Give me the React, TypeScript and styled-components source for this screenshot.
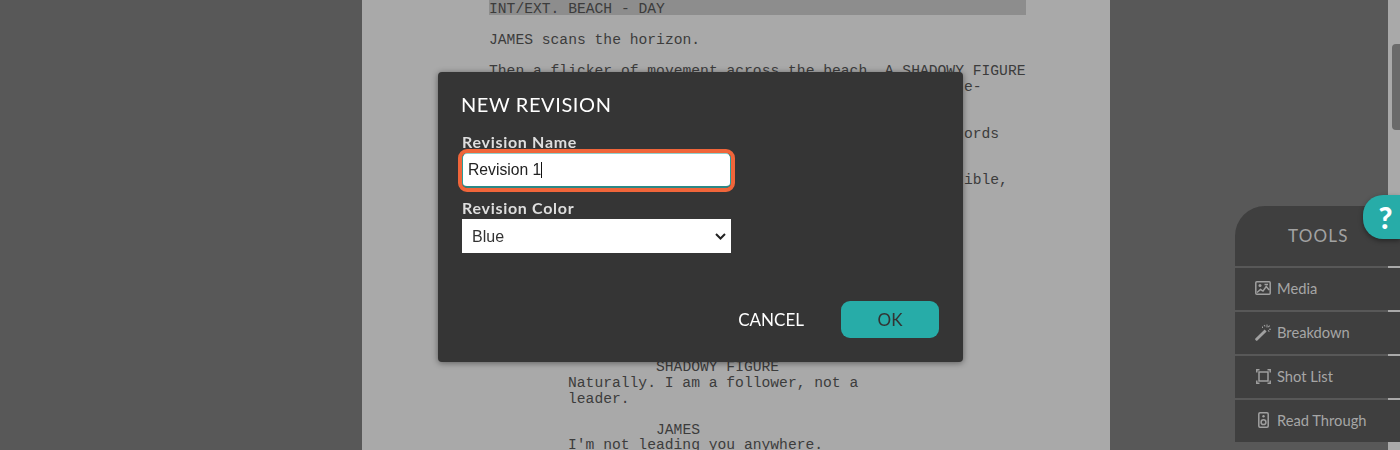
import styled, { createGlobalStyle } from "styled-components"

const GlobalStyle = createGlobalStyle`
  html, body {
    margin: 0;
    height: 100%;
    overflow: hidden;
    background: #585858;
  }
`

type LineKind = "action" | "character" | "dialogue"

const blank = (count: number) => Array.from({ length: count }, () => ({ text: " ", kind: "action" as LineKind }))
const action = (text: string) => ({ text, kind: "action" as LineKind })

// only the tails that stick out from behind the dialog are readable in the script
const SCRIPT_LINES = [
  ...blank(1),
  action("JAMES scans the horizon."),
  ...blank(1),
  action("Then a flicker of movement across the beach. A SHADOWY FIGURE"),
  action(" ".repeat(54) + "e-"),
  ...blank(2),
  action(" ".repeat(54) + "ords"),
  ...blank(2),
  action(" ".repeat(54) + "ible,"),
  ...blank(11),
  { text: "SHADOWY FIGURE", kind: "character" as LineKind },
  { text: "Naturally. I am a follower, not a", kind: "dialogue" as LineKind },
  { text: "leader.", kind: "dialogue" as LineKind },
  ...blank(1),
  { text: "JAMES", kind: "character" as LineKind },
  { text: "I'm not leading you anywhere.", kind: "dialogue" as LineKind },
]

function MediaIcon() {
  return (
    <svg viewBox="0 0 16 14" width="16" height="14" fill="none" stroke="currentColor" strokeWidth="1.5">
      <rect x="0.8" y="0.8" width="14.4" height="12.4" rx="1" />
      <circle cx="5" cy="4.6" r="1.5" fill="currentColor" stroke="none" />
      <path d="M2 11.5l3.5-3 2.5 1.6 3.2-4.6 3 3.6" />
      <path d="M9.5 3.5h3.5" />
    </svg>
  )
}

function WandIcon() {
  return (
    <svg viewBox="0 0 16 17" width="16" height="17" fill="currentColor">
      <path d="M0.4 14.6L9.6 5.4l2 2-9.2 9.2a1 1 0 0 1-1.3 0l-.7-.7a1 1 0 0 1 0-1.3z" />
      <path d="M11.5 0.5h1v3h-1zM14 4.8h2v1h-2zM7 4h1v-1.6H7zM14.4 1.2l.7.7-1.6 1.6-.7-.7zM8.6 1.4l.7-.7 1.3 1.4-.7.7zM14 8l.7-.7-1.3-1.3-.7.7z" />
    </svg>
  )
}

function FrameIcon() {
  return (
    <svg viewBox="0 0 15 15" width="15" height="15" fill="none" stroke="currentColor" strokeWidth="1.5">
      <rect x="3" y="3" width="9" height="9" />
      <path d="M0.8 3.5V0.8H3.5M11.5 0.8h2.7v2.7M14.2 11.5v2.7h-2.7M3.5 14.2H0.8v-2.7" />
    </svg>
  )
}

function SpeakerIcon() {
  return (
    <svg viewBox="0 0 11 16" width="11" height="16" fill="none" stroke="currentColor" strokeWidth="1.5">
      <rect x="0.8" y="0.8" width="9.4" height="14.4" rx="1.2" />
      <circle cx="5.5" cy="10.2" r="2.4" />
      <circle cx="5.5" cy="4.2" r="1.2" fill="currentColor" stroke="none" />
    </svg>
  )
}

const TOOLS = [
  { label: "Media", icon: <MediaIcon /> },
  { label: "Breakdown", icon: <WandIcon /> },
  { label: "Shot List", icon: <FrameIcon /> },
  { label: "Read Through", icon: <SpeakerIcon /> },
]

function App() {
  return (
    <>
      <GlobalStyle />
      <Workspace>
        <Paper>
          <Heading>INT/EXT. BEACH - DAY</Heading>
          {SCRIPT_LINES.map((line, i) => (
            <ScriptLine key={i} $kind={line.kind}>
              {line.text}
            </ScriptLine>
          ))}
        </Paper>
        <Scrollbar>
          <ScrollThumb />
        </Scrollbar>
      </Workspace>
      <ToolsPanel>
        <ToolsTitle>TOOLS</ToolsTitle>
        {TOOLS.map((tool) => (
          <ToolRow key={tool.label}>
            <ToolIcon>{tool.icon}</ToolIcon>
            {tool.label}
          </ToolRow>
        ))}
      </ToolsPanel>
      <HelpButton>?</HelpButton>
      <Overlay>
        <Modal>
          <ModalTitle>NEW REVISION</ModalTitle>
          <FieldLabel>Revision Name</FieldLabel>
          <NameField>
            <NameInput defaultValue="Revision 1" />
            <Caret />
          </NameField>
          <FieldLabel>Revision Color</FieldLabel>
          <ColorSelect defaultValue="Blue">
            <option>Blue</option>
            <option>Pink</option>
            <option>Yellow</option>
            <option>Green</option>
          </ColorSelect>
          <ModalActions>
            <CancelButton>CANCEL</CancelButton>
            <OkButton>OK</OkButton>
          </ModalActions>
        </Modal>
      </Overlay>
    </>
  )
}

const Workspace = styled.div`
  display: flex;
  justify-content: space-between;
  height: 450px;
  overflow: hidden;
  padding-left: 362px;
  background: #585858;
`

const Paper = styled.div`
  flex: none;
  box-sizing: border-box;
  width: 748px;
  height: 450px;
  overflow: hidden;
  padding: 0 84px 0 127px;
  background: #a9a9a9;
  color: #3c3c3c;
  font-family: "Liberation Mono", monospace;
  font-size: 14.67px;
  line-height: 15.6px;
  white-space: pre;
`

const Heading = styled.div`
  height: 15px;
  margin-bottom: 2.4px;
  background: #8d8d8d;
  line-height: 19px;
`

const ScriptLine = styled.div<{ $kind: LineKind }>`
  min-height: 15.6px;
  padding-left: ${(p) => (p.$kind === "character" ? "167px" : p.$kind === "dialogue" ? "79px" : "0")};
`

const Scrollbar = styled.div`
  flex: none;
  width: 12px;
  height: 450px;
  background: #a9a9a9;
`

const ScrollThumb = styled.div`
  width: 8px;
  height: 86px;
  margin: 44px 0 0 4px;
  border-radius: 4px 0 0 4px;
  background: #6a6a6a;
`

const ToolsPanel = styled.div`
  position: absolute;
  top: 206px;
  left: 1235px;
  width: 165px;
  font-family: Lato, sans-serif;
`

const ToolsTitle = styled.div`
  height: 60px;
  padding-left: 53px;
  border-top-left-radius: 30px;
  background: #3f3f3f;
  line-height: 60px;
  font-size: 17px;
  letter-spacing: 1.2px;
  color: #a2a2a2;
`

const ToolRow = styled.div`
  display: flex;
  align-items: center;
  box-sizing: border-box;
  height: 42px;
  margin-top: 2px;
  padding: 0 0 2px 20px;
  background: #3f3f3f;
  font-size: 14.7px;
  color: #a6a6a6;
`

const ToolIcon = styled.span`
  display: flex;
  justify-content: center;
  width: 16px;
  margin-right: 6px;
  color: #a0a0a0;
`

const HelpButton = styled.div`
  position: absolute;
  top: 195px;
  left: 1363px;
  display: flex;
  align-items: center;
  justify-content: center;
  box-sizing: border-box;
  width: 37px;
  height: 44px;
  padding-left: 8px;
  border-radius: 20px 0 0 20px;
  background: #27aca8;
  box-shadow: 0 2px 5px rgba(0, 0, 0, 0.4);
  color: #fff;
  font-family: Lato, sans-serif;
  font-size: 30px;
  font-weight: 900;
`

const Overlay = styled.div`
  position: fixed;
  inset: 0;
  display: flex;
  justify-content: center;
  align-items: flex-start;
  padding: 72px 0 0 1px;
`

const Modal = styled.div`
  box-sizing: border-box;
  display: flex;
  flex-direction: column;
  width: 525px;
  height: 290px;
  padding: 20px 24px 24px 24px;
  border-radius: 4px;
  background: #353535;
  box-shadow: 0 1px 6px rgba(0, 0, 0, 0.45);
  color: #fff;
  font-family: Lato, sans-serif;
`

const ModalTitle = styled.h2`
  margin: 0 0 17px -1px;
  font-size: 20px;
  font-weight: 400;
  line-height: 24px;
  letter-spacing: 0.6px;
`

const FieldLabel = styled.label`
  font-size: 16px;
  font-weight: 700;
  line-height: 18px;
  letter-spacing: 0.7px;
  color: #dedede;
`

const NameField = styled.div`
  position: relative;
  width: 269px;
  margin: 2px 0 11px;
`

const NameInput = styled.input`
  display: block;
  box-sizing: border-box;
  width: 100%;
  height: 35px;
  padding: 0 5px 1px;
  border: 1px solid #2a9d9a;
  border-top-color: #8fd0ce;
  border-bottom: 2px solid #2b8886;
  border-radius: 5px;
  outline: 4.5px solid #f0653a;
  background: #fff;
  color: #222;
  caret-color: transparent;
  font-family: "Liberation Sans", sans-serif;
  font-size: 15.7px;
`

const Caret = styled.span`
  position: absolute;
  top: 9px;
  left: 79px;
  width: 1px;
  height: 16px;
  background: #111;
`

const ColorSelect = styled.select`
  box-sizing: border-box;
  width: 269px;
  height: 34px;
  margin-top: 2px;
  padding: 1px 10px 0;
  border: 0;
  border-radius: 0;
  appearance: none;
  background: #fff url("data:image/svg+xml,%3Csvg xmlns='http://www.w3.org/2000/svg' width='11' height='7' viewBox='0 0 11 7'%3E%3Cpath d='M1 1l4.5 4.5L10 1' fill='none' stroke='%23222' stroke-width='2'/%3E%3C/svg%3E") no-repeat 253px 14px;
  color: #333;
  font-family: "Liberation Sans", sans-serif;
  font-size: 16px;
`

const ModalActions = styled.div`
  display: flex;
  justify-content: flex-end;
  align-items: center;
  gap: 37px;
  margin-top: auto;
`

const CancelButton = styled.button`
  padding: 0;
  border: 0;
  background: none;
  color: #fff;
  font-family: Lato, sans-serif;
  font-size: 17px;
`

const OkButton = styled.button`
  width: 98px;
  height: 37px;
  border: 0;
  border-radius: 9px;
  background: #27aca8;
  color: #333;
  font-family: Lato, sans-serif;
  font-size: 17px;
`

export default App
